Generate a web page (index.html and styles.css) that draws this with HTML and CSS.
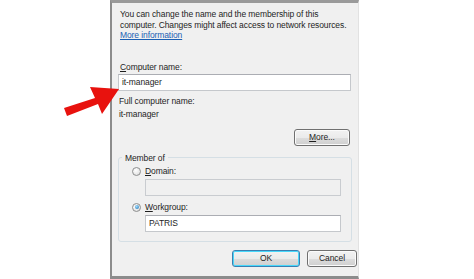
FILE: index.html
```html
<!DOCTYPE html>
<html lang="en">
<head>
    <meta charset="UTF-8">
    <title>Computer Name Changes</title>
    <link rel="stylesheet" href="styles.css">
</head>
<body>
    <div class="stage">
        <div class="dialog">
            <p class="intro">You can change the name and the membership of this<br>computer. Changes might affect access to network resources.<br><a href="#" class="link">More information</a></p>

            <label class="field-label"><u>C</u>omputer name:</label>
            <div class="textbox">it-manager</div>

            <div class="full-label">Full computer name:</div>
            <div class="full-value">it-manager</div>

            <div class="more-row">
                <button class="btn btn-more"><u>M</u>ore...</button>
            </div>

            <fieldset class="group">
                <legend>Member of</legend>
                <div class="radio-row">
                    <span class="radio"></span>
                    <span><u>D</u>omain:</span>
                </div>
                <div class="textbox textbox-inset disabled"></div>
                <div class="radio-row">
                    <span class="radio checked"></span>
                    <span><u>W</u>orkgroup:</span>
                </div>
                <div class="textbox textbox-inset">PATRIS</div>
            </fieldset>

            <div class="actions">
                <button class="btn btn-default">OK</button>
                <button class="btn btn-cancel">Cancel</button>
            </div>
        </div>

        <!-- red pointer over the computer name box -->
        <svg class="pointer" width="70" height="40" viewBox="0 0 70 40">
            <polygon points="2,24 33,14 28,3 57,5 40,30 36,20 5,32" fill="#e8120e"/>
        </svg>
    </div>
</body>
</html>
```

FILE: styles.css
```css
* {
    margin: 0;
    padding: 0;
    box-sizing: border-box;
}

body {
    background-color: white;
    font-family: 'Liberation Sans', Arial, sans-serif;
    font-size: 8.5px;
    letter-spacing: -0.1px;
    color: #1e1e1e;
}

.stage {
    position: relative;
    width: 474px;
    height: 279px;
}

.dialog {
    margin-left: 110px;
    width: 249px;
    height: 279px;
    background-color: #f0f0f0;
    border-left: 2px solid #8c8c8c;
    border-top: 3px solid #9a9a9a;
    border-bottom: 3px solid #8c8c8c;
    border-right: 1px solid #e2e2e2;
    padding: 6px 7px 0 6px;
    display: flex;
    flex-direction: column;
}

.intro {
    line-height: 10.5px;
    padding-left: 2px;
    white-space: nowrap;
}

.link {
    color: #1a5fb4;
    text-decoration: underline;
}

.field-label {
    margin-top: 21px;
    padding-left: 2px;
    line-height: 10px;
}

.textbox {
    height: 17px;
    background-color: white;
    border: 1px solid #c5c8cc;
    border-top-color: #abadb3;
    padding: 2px 3px;
    line-height: 11px;
    margin-top: 2px;
}

.full-label {
    margin-top: 5px;
    padding-left: 1px;
    line-height: 11px;
}

.full-value {
    margin-top: 2px;
    padding-left: 1px;
    line-height: 11px;
}

.more-row {
    display: flex;
    justify-content: flex-end;
    margin-top: 9px;
    padding-right: 1px;
}

.btn {
    font-family: inherit;
    font-size: 8.5px;
    letter-spacing: -0.1px;
    color: #1e1e1e;
    height: 17px;
    border: 1px solid #707070;
    border-radius: 3px;
    background: linear-gradient(#f2f2f2 0%, #ebebeb 50%, #dddddd 51%, #cfcfcf 100%);
    box-shadow: inset 0 0 0 1px #fbfbfb;
}

.btn-more {
    width: 56px;
}

.group {
    margin-top: 7px;
    border: 1px solid #d5dfe5;
    border-radius: 3px;
    padding: 0 10px 9px 26px;
    margin-right: -1px;
}

.group legend {
    padding: 0 3px;
    margin-left: -23px;
    line-height: 10px;
}

.radio-row {
    display: flex;
    align-items: center;
    gap: 4px;
    margin-left: -13px;
    line-height: 11px;
    margin-top: 3px;
}

.radio-row + .textbox-inset {
    margin-top: 2px;
}

.textbox-inset + .radio-row {
    margin-top: 6px;
}

.radio {
    width: 9px;
    height: 9px;
    border-radius: 50%;
    border: 1px solid #8e8f8f;
    background: radial-gradient(circle at 40% 35%, #ffffff 0%, #e4e4e4 70%, #cfcfcf 100%);
    display: flex;
    align-items: center;
    justify-content: center;
}

.radio.checked::after {
    content: "";
    width: 4px;
    height: 4px;
    border-radius: 50%;
    background: radial-gradient(circle at 40% 35%, #9fdcff, #1a6fb0);
}

.textbox-inset.disabled {
    background-color: #f0f0f0;
    border-color: #c9ccd0;
}

.actions {
    display: flex;
    justify-content: flex-end;
    gap: 7px;
    margin-top: 8px;
}

.btn-default {
    width: 68px;
    border-color: #3c7fb1;
    box-shadow: inset 0 0 0 1px #48d8fb;
}

.btn-cancel {
    width: 50px;
    margin-right: -6px;
}

.pointer {
    position: absolute;
    left: 62px;
    top: 84px;
}
```
